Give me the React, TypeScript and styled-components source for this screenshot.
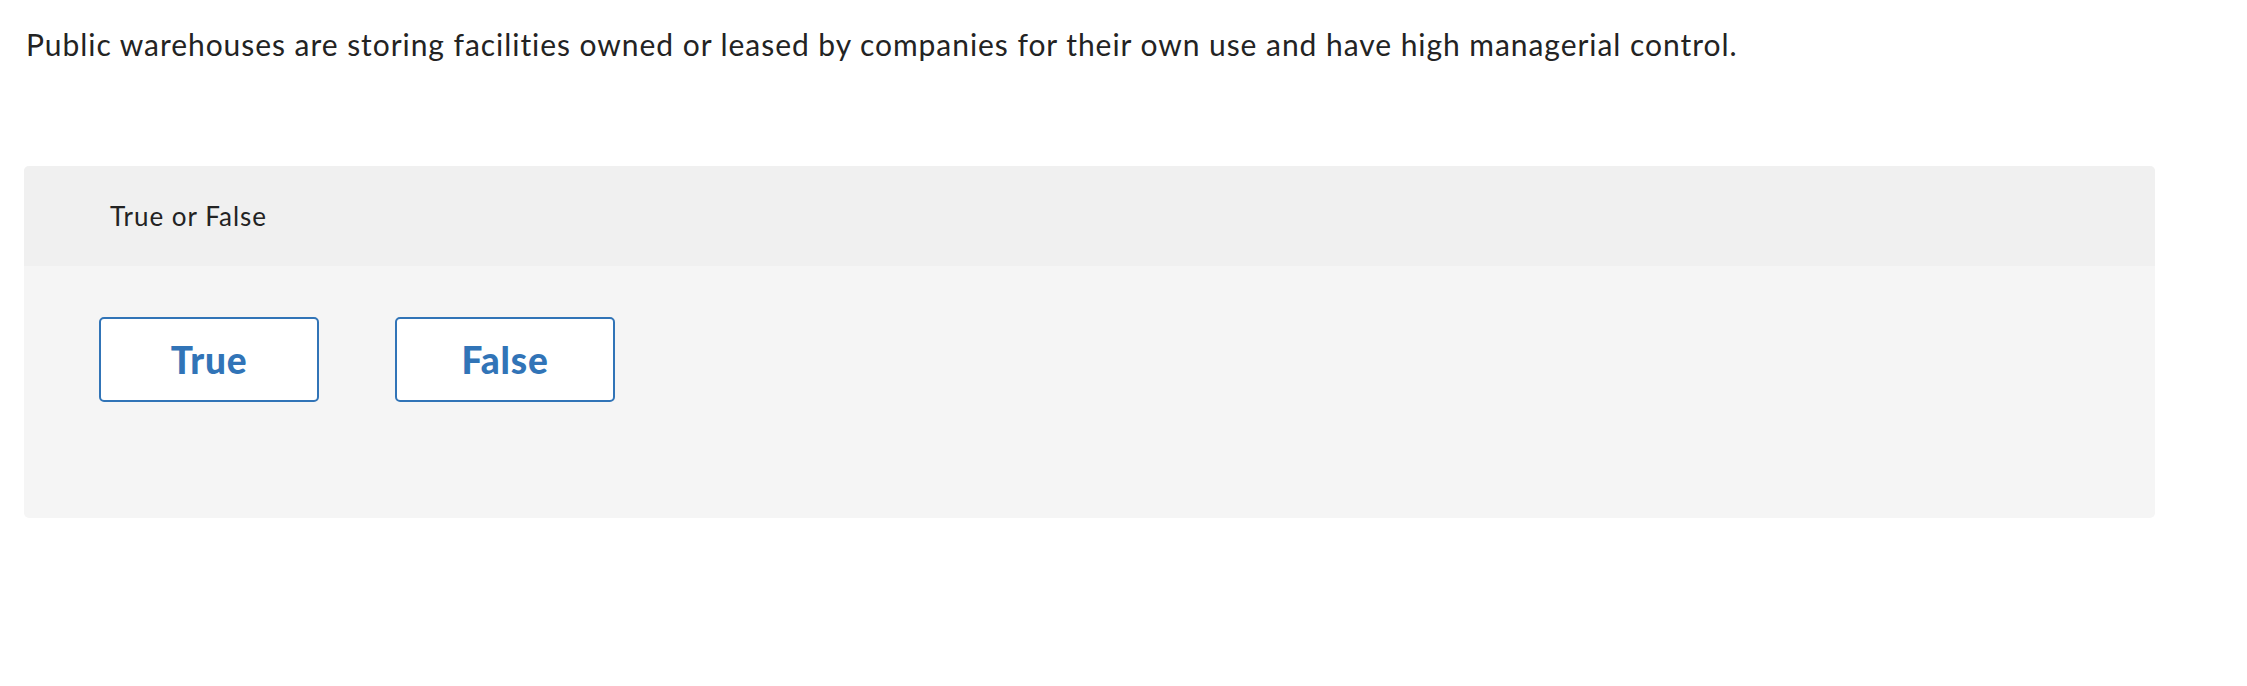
import styled, { createGlobalStyle } from "styled-components"

const GlobalStyle = createGlobalStyle`
  html, body {
    margin: 0;
    padding: 0;
    background: #ffffff;
  }
  body {
    font-family: Lato, "Open Sans", Arial, sans-serif;
    color: #222222;
    font-variant-ligatures: none;
  }
`

const Page = styled.div`
  padding: 24px 92px 0 24px;
`

const Question = styled.p`
  margin: 0;
  font-size: 30px;
  line-height: 40px;
  letter-spacing: 0.95px;
  padding-left: 2px;
  color: #232323;
`

const Panel = styled.div`
  margin-top: 102px;
  width: 2131px;
  border-radius: 5px;
  overflow: hidden;
  background: #f5f5f5;
`

const PanelHeader = styled.div`
  height: 100px;
  background: #f0f0f0;
  display: flex;
  align-items: center;
  padding-left: 86px;
  font-size: 26px;
  letter-spacing: 1px;
  color: #232323;
`

const Choices = styled.div`
  display: flex;
  gap: 76px;
  padding: 51px 0 116px 75px;
`

const ChoiceButton = styled.button`
  width: 220px;
  height: 85px;
  box-sizing: border-box;
  border: 2px solid #3174b7;
  border-radius: 5px;
  background: #ffffff;
  color: #3174b7;
  font-family: Lato, "Open Sans", Arial, sans-serif;
  font-weight: 900;
  font-size: 37px;
  letter-spacing: 0.8px;
  cursor: pointer;
  padding: 0;
`

const App = () => {
  return (
    <>
      <GlobalStyle />
      <Page>
        <Question>
          Public warehouses are storing facilities owned or leased by companies for their own use and have high managerial control.
        </Question>
        <Panel>
          <PanelHeader>True or False</PanelHeader>
          <Choices>
            <ChoiceButton>True</ChoiceButton>
            <ChoiceButton>False</ChoiceButton>
          </Choices>
        </Panel>
      </Page>
    </>
  )
}

export default App
